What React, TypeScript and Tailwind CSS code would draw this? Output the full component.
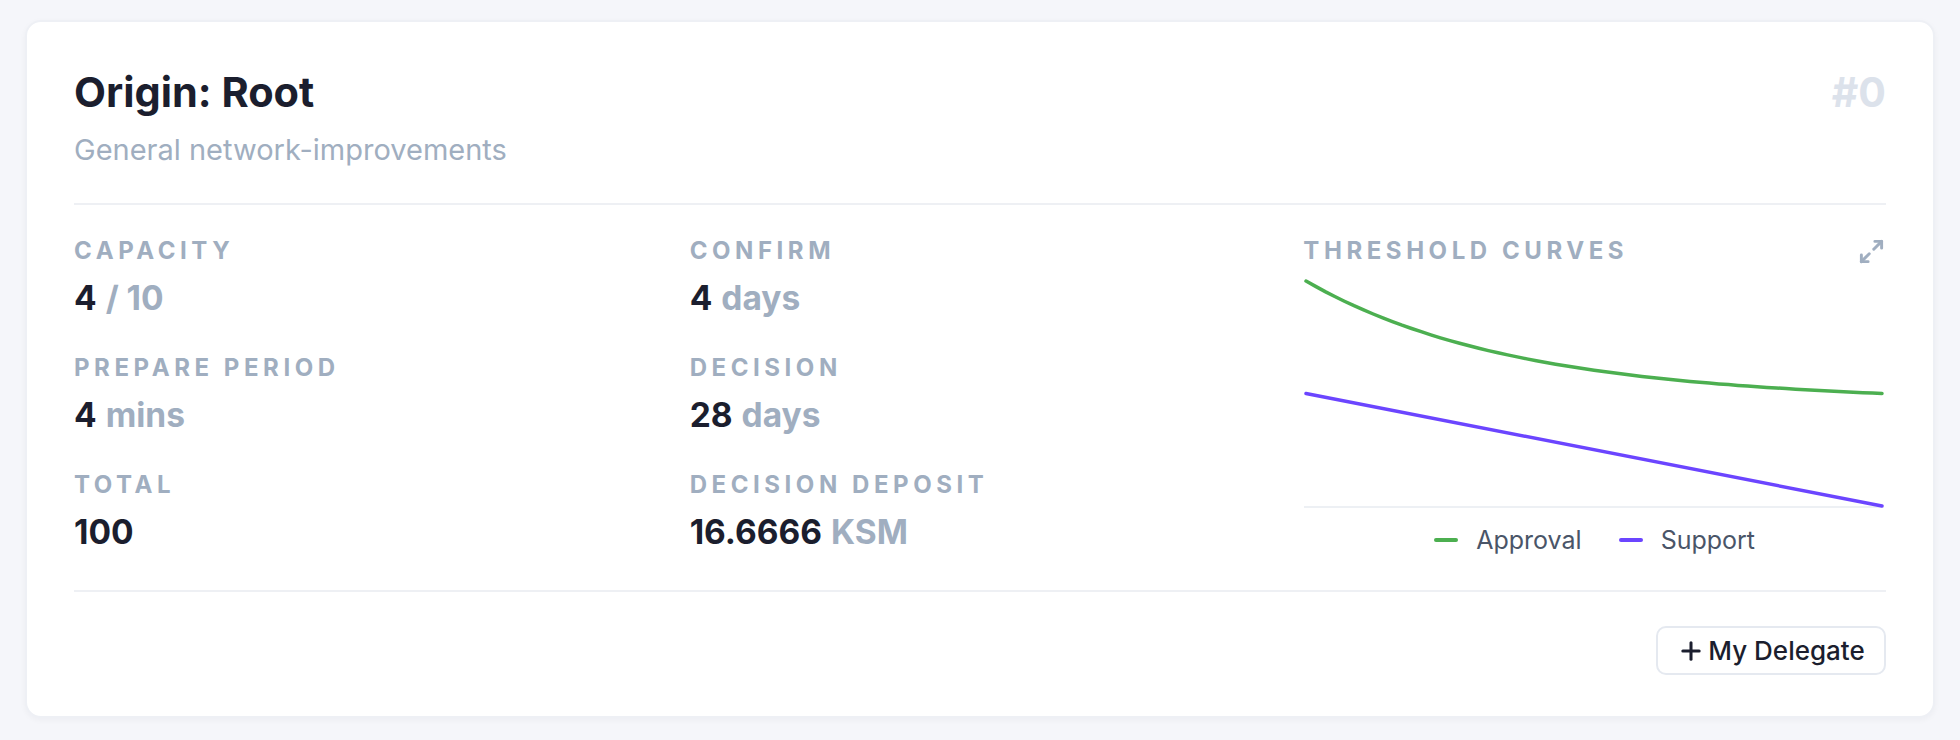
import { Maximize2, Plus } from "lucide-react";

type Stat = { label: string; value: string; unit?: string };

const left: Stat[] = [
  { label: "Capacity", value: "4", unit: "/ 10" },
  { label: "Prepare Period", value: "4", unit: "mins" },
  { label: "Total", value: "100" },
];

const middle: Stat[] = [
  { label: "Confirm", value: "4", unit: "days" },
  { label: "Decision", value: "28", unit: "days" },
  { label: "Decision Deposit", value: "16.6666", unit: "KSM" },
];

const W = 582;
const H = 240;
const BASE = 236;

// approval drops from 100% to 50%, support falls linearly 50% -> 0%
function approvalPath() {
  const pts: string[] = [];
  for (let i = 0; i <= 60; i++) {
    const t = i / 60;
    const v = 50 + 50 * (Math.exp(-2.9 * t) - t * Math.exp(-2.9));
    const x = 3 + t * (W - 6);
    const y = BASE - v * 2.25;
    pts.push(`${i === 0 ? "M" : "L"}${x.toFixed(1)} ${y.toFixed(1)}`);
  }
  return pts.join(" ");
}

function StatColumn({ items }: { items: Stat[] }) {
  return (
    <div className="flex flex-col gap-[34px]">
      {items.map((s) => (
        <div key={s.label}>
          <div className="text-[24px] leading-[32px] font-bold uppercase tracking-[0.19em] text-[#a0aec0]">
            {s.label}
          </div>
          <div className="mt-[11px] text-[33.5px] leading-[40px] font-bold text-[#1b1e2e]">
            {s.value}
            {s.unit && <span className="ml-[9px] text-[#a0aec0]">{s.unit}</span>}
          </div>
        </div>
      ))}
    </div>
  );
}

function LegendItem({ color, label }: { color: string; label: string }) {
  return (
    <div className="flex items-center gap-[18px]">
      <span className={`h-[4px] w-[24px] rounded-full ${color}`} />
      <span className="text-[25px] leading-[32px] text-[#4a5568]">{label}</span>
    </div>
  );
}

export default function App() {
  return (
    <div className="min-h-screen bg-[#f5f6fa] px-[25px] pt-[20px] font-['Inter',sans-serif]">
      <div className="rounded-2xl border-2 border-[#eef0f5] bg-white px-[47px] pt-[46px] pb-[41px] shadow-[0_2px_6px_rgba(20,30,60,0.04)]">
        <div className="flex items-start justify-between">
          <h2 className="text-[41.5px] leading-[48px] font-bold text-[#1b1e2e]">Origin: Root</h2>
          <span className="text-[41px] leading-[48px] font-bold text-[#dce2eb]">#0</span>
        </div>
        <p className="mt-[14px] text-[29px] leading-[40px] text-[#a0aec0]">General network-improvements</p>

        <div className="mt-[33px] h-[2px] bg-[#eef0f4]" />

        <div className="mt-[30px] grid grid-cols-3 items-start gap-x-[35px]">
          <StatColumn items={left} />
          <StatColumn items={middle} />

          <div className="-ml-[2px]">
            <div className="flex items-center justify-between">
              <span className="text-[24px] leading-[32px] font-bold uppercase tracking-[0.19em] text-[#a0aec0]">
                Threshold Curves
              </span>
              <Maximize2 size={27} strokeWidth={2.6} className="mr-[1px] text-[#a0aec0]" />
            </div>
            <svg className="mt-[3px] block" width={W} height={H} viewBox={`0 0 ${W} ${H}`}>
              <line x1={1} y1={BASE + 1} x2={W - 1} y2={BASE + 1} stroke="#edf0f4" strokeWidth={2} />
              <path d={approvalPath()} fill="none" stroke="#4caf50" strokeWidth={3.5} strokeLinecap="round" />
              <line
                x1={3}
                y1={BASE - 112.5}
                x2={W - 3}
                y2={BASE}
                stroke="#6b45ff"
                strokeWidth={3.5}
                strokeLinecap="round"
              />
            </svg>
            <div className="mt-[14px] flex justify-center gap-[37px]">
              <LegendItem color="bg-[#4caf50]" label="Approval" />
              <LegendItem color="bg-[#6b45ff]" label="Support" />
            </div>
          </div>
        </div>

        <div className="mt-[34px] h-[2px] bg-[#eef0f4]" />

        <div className="mt-[34px] flex justify-end">
          <button className="flex h-[49px] w-[230px] items-center justify-center gap-[3px] rounded-[10px] border-2 border-[#e5e9f0] bg-white text-[26px] font-medium text-[#1b1e2e]">
            <Plus size={28} strokeWidth={2.6} />
            My Delegate
          </button>
        </div>
      </div>
    </div>
  );
}
